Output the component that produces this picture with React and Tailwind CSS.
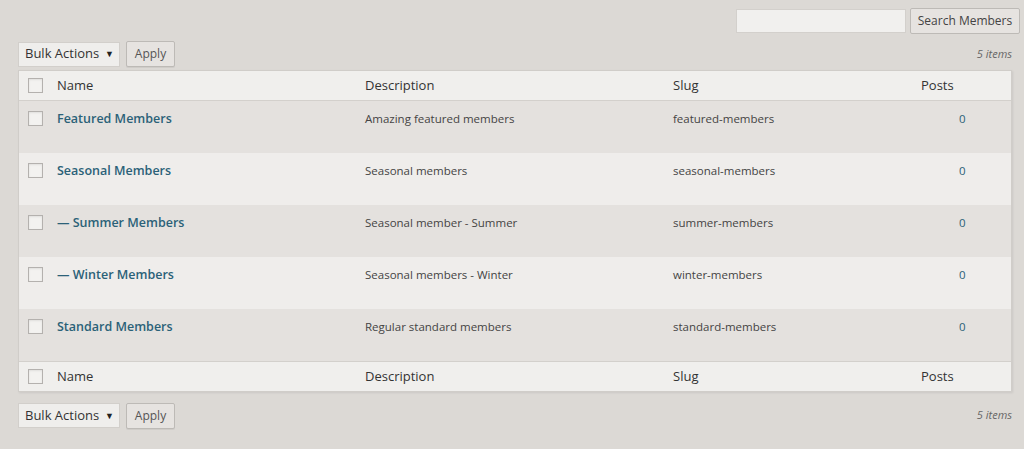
import React from 'react';

const rows = [
  { name: 'Featured Members', desc: 'Amazing featured members', slug: 'featured-members', posts: 0 },
  { name: 'Seasonal Members', desc: 'Seasonal members', slug: 'seasonal-members', posts: 0 },
  { name: '— Summer Members', desc: 'Seasonal member - Summer', slug: 'summer-members', posts: 0 },
  { name: '— Winter Members', desc: 'Seasonal members - Winter', slug: 'winter-members', posts: 0 },
  { name: 'Standard Members', desc: 'Regular standard members', slug: 'standard-members', posts: 0 },
];

const cols = 'grid grid-cols-[31px_308px_308px_248px_1fr]';

const Checkbox = () => (
  <span className="block w-[15px] h-[15px] border border-[#b4b1ae] bg-[#f3f2f0] shadow-[inset_0_1px_2px_rgba(0,0,0,0.08)]" />
);

const Toolbar = ({ top }) => (
  <div className={`w-[994px] flex items-center justify-between ${top ? 'h-[36px] pt-[4px]' : 'h-[44px] pt-[3px]'}`}>
    <div className="flex items-center gap-[6px]">
      <div className="flex items-center justify-between w-[102px] h-[25px] pl-[6px] pr-[5px] bg-[#efeeec] border border-[#d2cfcb] text-[13px] text-[#333]">
        <span>Bulk Actions</span>
        <span className="text-[9px] text-[#222]">▼</span>
      </div>
      <button className="w-[49px] h-[26px] bg-[#e6e3e0] border border-[#bdbab6] rounded-[2px] text-[12px] text-[#555] shadow-[0_1px_0_rgba(0,0,0,0.06)]">
        Apply
      </button>
    </div>
    <span className="italic text-[11px] text-[#666]">5 items</span>
  </div>
);

const HeaderRow = () => (
  <div className={`${cols} h-[29px] items-center bg-[#f0efed] text-[13px] text-[#333]`}>
    <div className="pl-[9px]"><Checkbox /></div>
    <div className="pl-[7px]">Name</div>
    <div className="pl-[7px]">Description</div>
    <div className="pl-[7px]">Slug</div>
    <div className="pl-[7px]">Posts</div>
  </div>
);

export default function App() {
  return (
    <div className="w-[1024px] h-[449px] bg-[#dcd9d5] px-[18px] pt-[8px] overflow-hidden" style={{ fontFamily: '"Open Sans", "Noto Sans", sans-serif' }}>
      <div className="flex justify-end gap-[4px] -mr-[14px] h-[26px]">
        <div className="w-[170px] h-[24px] mt-[1px] bg-[#f1f0ee] border border-[#d3d0cc]" />
        <button className="w-[110px] h-[26px] bg-[#e6e3e0] border border-[#bdbab6] rounded-[2px] text-[12px] text-[#444]">
          Search Members
        </button>
      </div>
      <Toolbar top />
      <div className="w-[994px] border border-[#d0cdc9] shadow-[1px_1px_2px_rgba(0,0,0,0.08)]">
        <div className="border-b border-[#d3d0cc]"><HeaderRow /></div>
        {rows.map((r, i) => (
          <div key={r.slug} className={`${cols} h-[52px] pt-[9px] ${i % 2 === 0 ? 'bg-[#e4e1de]' : 'bg-[#efedeb]'}`}>
            <div className="pl-[9px] pt-[1px]"><Checkbox /></div>
            <div className="pl-[7px] text-[12.5px] font-semibold text-[#2b6178] leading-[17px]">{r.name}</div>
            <div className="pl-[7px] text-[11.5px] text-[#444] leading-[17px]">{r.desc}</div>
            <div className="pl-[7px] text-[11.5px] text-[#444] leading-[17px]">{r.slug}</div>
            <div className="pl-[45px] text-[11.5px] text-[#2b6178] leading-[17px]">{r.posts}</div>
          </div>
        ))}
        <div className="border-t border-[#d3d0cc]"><HeaderRow /></div>
      </div>
      <Toolbar />
    </div>
  );
}
